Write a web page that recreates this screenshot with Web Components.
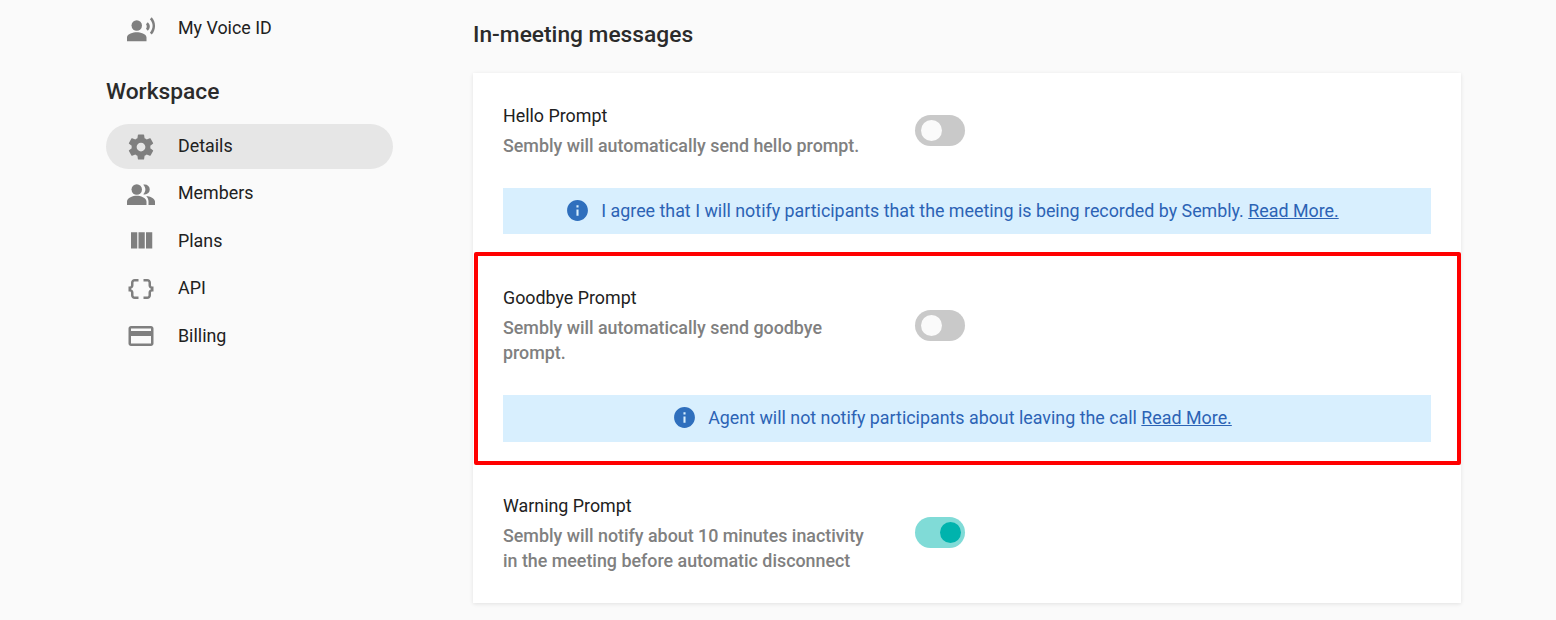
<!DOCTYPE html>
<html>
<head>
<meta charset="utf-8">
<title>Workspace details</title>
<style>
  html, body { margin: 0; height: 620px; overflow: hidden; background: #fafafa; }
  body { font-family: Roboto, "Liberation Sans", sans-serif; color: #212121; }
  settings-page { height: 620px; }
</style>
</head>
<body>
<settings-page>
  <side-nav slot="nav">
    <nav-item icon="voice" style="margin-bottom:28px">My Voice ID</nav-item>
    <nav-title>Workspace</nav-title>
    <nav-item icon="gear" active>Details</nav-item>
    <nav-item icon="people">Members</nav-item>
    <nav-item icon="columns">Plans</nav-item>
    <nav-item icon="braces">API</nav-item>
    <nav-item icon="card">Billing</nav-item>
  </side-nav>
  <message-settings heading="In-meeting messages">
    <prompt-row title="Hello Prompt" style="height:179px;--row-top:30px;--switch-top:42px;--banner-top:115px">
      Sembly will automatically send hello prompt.
      <info-banner slot="banner">I agree that I will notify participants that the meeting is being recorded by Sembly. <a href="#">Read More.</a></info-banner>
    </prompt-row>
    <prompt-row title="Goodbye Prompt" highlighted style="height:213px;--row-top:33px;--switch-top:58px;--banner-top:143px">
      Sembly will automatically send goodbye prompt.
      <info-banner slot="banner" style="height:47px">Agent will not notify participants about leaving the call <a href="#">Read More.</a></info-banner>
    </prompt-row>
    <prompt-row title="Warning Prompt" on style="height:138px;--row-top:28px;--switch-top:52px">
      Sembly will notify about 10 minutes inactivity in the meeting before automatic disconnect
    </prompt-row>
  </message-settings>
</settings-page>

<script>
const ICONS = {
  voice: '<circle cx="8.6" cy="9.2" r="4.2"/><path d="M.8 21.8v-3.2c0-2.8 5-4.1 7.8-4.1s7.8 1.3 7.8 4.1v3.2zM17.4 6.6L16 8.1c.8 1.1.8 2.6 0 3.7l1.4 1.5c2.2-2 2.2-4.7 0-6.7zM20.6 2.6l-1.5 1.5c2.9 3 2.9 7.6 0 10.8l1.5 1.5c3.5-3.9 3.5-9.9 0-13.8z"/>',
  gear: '<path d="M19.43 12.98c.04-.32.07-.64.07-.98s-.03-.66-.07-.98l2.11-1.65c.19-.15.24-.42.12-.64l-2-3.46c-.12-.22-.39-.3-.61-.22l-2.49 1c-.52-.4-1.08-.73-1.69-.98l-.38-2.65C14.46 2.18 14.25 2 14 2h-4c-.25 0-.46.18-.49.42l-.38 2.65c-.61.25-1.17.59-1.69.98l-2.49-1c-.23-.09-.49 0-.61.22l-2 3.46c-.13.22-.07.49.12.64l2.11 1.65c-.04.32-.07.65-.07.98s.03.66.07.98l-2.11 1.65c-.19.15-.24.42-.12.64l2 3.46c.12.22.39.3.61.22l2.49-1c.52.4 1.08.73 1.69.98l.38 2.65c.03.24.24.42.49.42h4c.25 0 .46-.18.49-.42l.38-2.65c.61-.25 1.17-.59 1.69-.98l2.49 1c.23.09.49 0 .61-.22l2-3.46c.12-.22.07-.49-.12-.64l-2.11-1.65zM12 15.5c-1.93 0-3.5-1.57-3.5-3.5s1.57-3.5 3.5-3.5 3.5 1.57 3.5 3.5-1.57 3.5-3.5 3.5z"/>',
  people: '<circle cx="8.6" cy="8.4" r="4.2"/><path d="M13.8 4.6c1 1 1.7 2.3 1.7 3.8s-.7 2.8-1.7 3.8c.4.1.8.2 1.2.2a4 4 0 0 0 0-8c-.4 0-.8.1-1.2.2zM.8 20.8V18c0-3 5-4.6 7.8-4.6s7.8 1.6 7.8 4.6v2.8zM18 20.8h5.2V18c0-2.6-4-4.2-7-4.5 1.1 1.1 1.8 2.6 1.8 4.5z"/>',
  columns: '<path d="M10 18h5V5h-5v13zm-6 0h5V5H4v13zM16 5v13h5V5h-5z"/>',
  braces: '<path d="M4 7v2c0 .55-.45 1-1 1H2v4h1c.55 0 1 .45 1 1v2c0 1.65 1.35 3 3 3h3v-2H7c-.55 0-1-.45-1-1v-2c0-1.3-.84-2.42-2-2.83v-.34C5.16 11.42 6 10.3 6 9V7c0-.55.45-1 1-1h3V4H7C5.35 4 4 5.35 4 7zm17 3c-.55 0-1-.45-1-1V7c0-1.65-1.35-3-3-3h-3v2h3c.55 0 1 .45 1 1v2c0 1.3.84 2.42 2 2.83v.34c-1.16.41-2 1.52-2 2.83v2c0 .55-.45 1-1 1h-3v2h3c1.65 0 3-1.35 3-3v-2c0-.55.45-1 1-1h1v-4h-1z"/>',
  card: '<path d="M20 4H4c-1.11 0-1.99.89-1.99 2L2 18c0 1.11.89 2 2 2h16c1.11 0 2-.89 2-2V6c0-1.11-.89-2-2-2zm0 14H4v-6h16v6zm0-10H4V6h16v2z"/>'
};

class SettingsPage extends HTMLElement {
  constructor() {
    super();
    this.attachShadow({ mode: 'open' });
    this.shadowRoot.innerHTML = `
      <style>
        :host { display: flex; padding-left: 106px; box-sizing: border-box; }
        .nav { display: block; width: 287px; margin-right: 80px; flex: none; }
        .main { display: block; width: 988px; flex: none; }
      </style>
      <div class="nav"><slot name="nav"></slot></div>
      <div class="main"><slot></slot></div>
    `;
  }
}

class SideNav extends HTMLElement {
  constructor() {
    super();
    this.attachShadow({ mode: 'open' });
    this.shadowRoot.innerHTML = `
      <style>
        :host { display: flex; flex-direction: column; padding-top: 6px; }
      </style>
      <slot></slot>
    `;
  }
}

class NavTitle extends HTMLElement {
  constructor() {
    super();
    this.attachShadow({ mode: 'open' });
    this.shadowRoot.innerHTML = `
      <style>
        :host { display: block; font-size: 22.75px; line-height: 26px; font-weight: 500; color: #2b2b2b; margin-bottom: 19px; }
      </style>
      <slot></slot>
    `;
  }
}

class NavItem extends HTMLElement {
  constructor() {
    super();
    this.attachShadow({ mode: 'open' });
    const icon = ICONS[this.getAttribute('icon')] || '';
    this.shadowRoot.innerHTML = `
      <style>
        :host { display: flex; align-items: center; height: 45px; margin-bottom: 2.4px; border-radius: 23px; font-size: 17.85px; color: #212121; flex: none; }
        :host([active]) { background: #e6e6e6; }
        svg { width: 30px; height: 30px; fill: #7f7f7f; margin: 0 22px 0 20px; flex: none; }
        span { position: relative; top: -1px; }
      </style>
      <svg viewBox="0 0 24 24">${icon}</svg>
      <span><slot></slot></span>
    `;
  }
}

class MessageSettings extends HTMLElement {
  constructor() {
    super();
    this.attachShadow({ mode: 'open' });
    this.shadowRoot.innerHTML = `
      <style>
        :host { display: block; padding-top: 21px; }
        h2 { margin: 0 0 24px; font-size: 22.75px; line-height: 28px; font-weight: 500; color: #2b2b2b; }
        .card { background: #fff; box-shadow: 0 1px 4px rgba(0,0,0,.1); }
      </style>
      <h2>${this.getAttribute('heading')}</h2>
      <div class="card"><slot></slot></div>
    `;
  }
}

class PromptRow extends HTMLElement {
  constructor() {
    super();
    this.attachShadow({ mode: 'open' });
    this.shadowRoot.innerHTML = `
      <style>
        :host { display: block; position: relative; box-sizing: border-box; padding: var(--row-top) 30px 0; }
        :host([highlighted])::after {
          content: ""; position: absolute; inset: 0 0 0 1px;
          border: 4px solid #f00; border-radius: 2px; pointer-events: none;
        }
        .top { display: flex; align-items: flex-start; }
        .text { width: 362px; margin-right: 50px; flex: none; }
        .title { font-size: 17.85px; line-height: 25px; color: #212121; margin-bottom: 5px; }
        .desc { font-size: 17.85px; line-height: 25px; font-weight: 500; color: #808080; }
        .switch { position: relative; width: 50px; height: 31px; border-radius: 16px; background: #c9c9c9; flex: none; margin-top: calc(var(--switch-top) - var(--row-top)); }
        .switch::after { content: ""; position: absolute; top: 5px; left: 6px; width: 21px; height: 21px; border-radius: 50%; background: #fafafa; }
        :host([on]) .switch { background: #80dbd7; }
        :host([on]) .switch::after { left: 25px; background: #00b3ad; }
        .banner { position: absolute; left: 30px; right: 30px; top: var(--banner-top); }
      </style>
      <div class="top">
        <div class="text">
          <div class="title">${this.getAttribute('title')}</div>
          <div class="desc"><slot></slot></div>
        </div>
        <div class="switch"></div>
      </div>
      <div class="banner"><slot name="banner"></slot></div>
    `;
  }
}

class InfoBanner extends HTMLElement {
  constructor() {
    super();
    this.attachShadow({ mode: 'open' });
    this.shadowRoot.innerHTML = `
      <style>
        :host { display: flex; align-items: center; justify-content: center; box-sizing: border-box; height: 46px; padding: 0 30px 2px 0; background: #d8effe; font-size: 17.85px; color: #2c63b5; font-weight: 400; }
        svg { width: 25px; height: 25px; fill: #2f6fbd; margin-right: 11px; flex: none; }
        ::slotted(a) { color: #2c63b5; text-decoration: underline; }
      </style>
      <svg viewBox="0 0 24 24"><path d="M12 2C6.48 2 2 6.48 2 12s4.48 10 10 10 10-4.48 10-10S17.52 2 12 2zm1 15h-2v-6h2v6zm0-8h-2V7h2v2z"/></svg>
      <span><slot></slot></span>
    `;
  }
}

customElements.define('settings-page', SettingsPage);
customElements.define('side-nav', SideNav);
customElements.define('nav-title', NavTitle);
customElements.define('nav-item', NavItem);
customElements.define('message-settings', MessageSettings);
customElements.define('prompt-row', PromptRow);
customElements.define('info-banner', InfoBanner);
</script>
</body>
</html>
